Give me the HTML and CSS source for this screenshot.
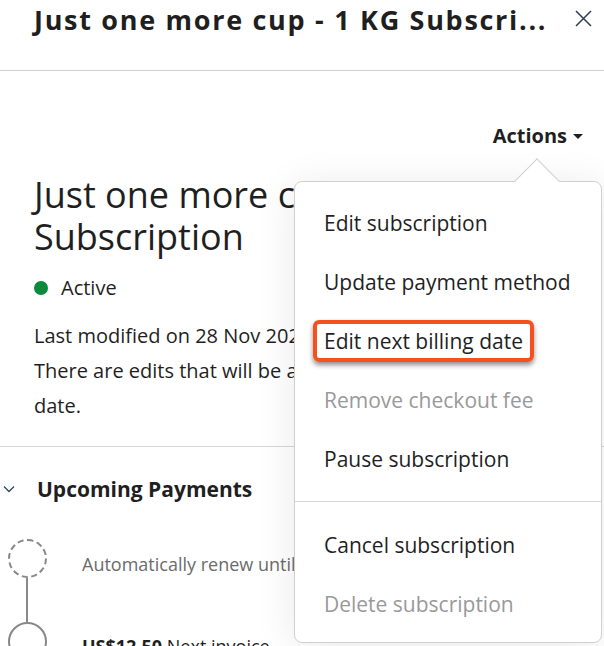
FILE: index.html
```html
<!DOCTYPE html>
<html lang="en">
<head>
  <meta charset="UTF-8">
  <title>Subscription</title>
  <link rel="stylesheet" href="styles.css">
</head>
<body>

  <div class="painel">
    <div class="cabecalho">
      <h1 class="titulo">Just one more cup - 1 KG Subscri...</h1>
      <button class="fechar" aria-label="Close">
        <svg width="17" height="17" viewBox="0 0 17 17"><path d="M1 1 L16 16 M16 1 L1 16" stroke="#2d3e50" stroke-width="1.5" fill="none"/></svg>
      </button>
    </div>

    <div class="linha-acoes">
      <span class="acoes">Actions <span class="seta"></span></span>
    </div>

    <div class="conteudo">
      <h2 class="nome">Just one more cup - 1 KG Subscription</h2>
      <div class="status"><span class="bolinha"></span>Active</div>
      <p class="texto">Last modified on 28 Nov 2023 at 10:42</p>
      <p class="texto">There are edits that will be applied on the next billing date.</p>
    </div>

    <hr class="divisor">

    <div class="secao">
      <div class="secao-titulo">
        <svg width="12" height="8" viewBox="0 0 12 8"><path d="M1 1.5 L6 6.5 L11 1.5" stroke="#33475b" stroke-width="1.3" fill="none"/></svg>
        <span>Upcoming Payments</span>
      </div>
      <div class="linha-tempo">
        <div class="marcadores">
          <span class="circulo tracejado"></span>
          <span class="traco"></span>
          <span class="circulo"></span>
        </div>
        <div class="eventos">
          <div class="evento cinza">Automatically renew until cancelled</div>
          <div class="evento"><b>US$12.50</b> Next invoice</div>
        </div>
      </div>
    </div>

    <!-- menu aberto do botao Actions -->
    <div class="menu">
      <span class="ponta"></span>
      <div class="item">Edit subscription</div>
      <div class="item">Update payment method</div>
      <div class="item"><span class="destaque">Edit next billing date</span></div>
      <div class="item desativado">Remove checkout fee</div>
      <div class="item">Pause subscription</div>
      <div class="menu-divisor"></div>
      <div class="item">Cancel subscription</div>
      <div class="item desativado">Delete subscription</div>
    </div>
  </div>

</body>
</html>
```

FILE: styles.css
```css
body {
  margin: 0;
  font-family: "Open Sans", Arial, sans-serif;
  color: #1f1f1f;
  background: white;
}
.painel {
  position: relative;
  width: 604px;
  height: 646px;
  overflow: hidden;
}
.cabecalho {
  height: 67px;
  border-bottom: 1px solid #cfcfcf;
  display: flex;
  align-items: flex-start;
  justify-content: space-between;
  padding: 3px 12px 0 34px;
}
.titulo {
  margin: 0;
  font-size: 27px;
  line-height: 34px;
  font-weight: 700;
  letter-spacing: 1.7px;
  white-space: nowrap;
}
.fechar {
  background: none;
  border: none;
  padding: 0;
  margin-top: 7px;
  cursor: pointer;
}
.linha-acoes {
  display: flex;
  justify-content: flex-end;
  padding: 50px 21px 0 0;
  height: 30px;
}
.acoes {
  font-size: 20px;
  line-height: 30px;
  font-weight: 700;
  display: flex;
  align-items: center;
  gap: 6px;
}
.seta {
  width: 0;
  height: 0;
  border-left: 5px solid transparent;
  border-right: 5px solid transparent;
  border-top: 5px solid #1f1f1f;
}
.conteudo {
  padding: 23px 34px 0 34px;
  width: 536px;
}
.nome {
  margin: 0;
  font-size: 36px;
  line-height: 42px;
  font-weight: 400;
}
.status {
  margin-top: 14px;
  display: flex;
  align-items: center;
  font-size: 20px;
  line-height: 32px;
}
.bolinha {
  width: 14px;
  height: 14px;
  border-radius: 50%;
  background: #0b8a3e;
  margin: 0 13px 0 0;
}
.texto {
  margin: 0;
  font-size: 20px;
  line-height: 35px;
}
.status + .texto {
  margin-top: 14px;
}
.divisor {
  border: none;
  border-top: 1px solid #d6d6d6;
  margin: 23px 0 0 0;
}
.secao-titulo {
  display: flex;
  align-items: center;
  gap: 22px;
  padding: 28px 0 0 3px;
  font-size: 21px;
  line-height: 28px;
  font-weight: 700;
}
.linha-tempo {
  display: flex;
  padding: 36px 0 0 8px;
}
.marcadores {
  display: flex;
  flex-direction: column;
  align-items: center;
  width: 38px;
}
.circulo {
  width: 35px;
  height: 35px;
  border: 2px solid #888;
  border-radius: 50%;
  flex-shrink: 0;
}
.tracejado {
  border-style: dashed;
}
.traco {
  width: 2px;
  height: 44px;
  background: #888;
}
.eventos {
  padding-left: 36px;
}
.evento {
  font-size: 18px;
  line-height: 24px;
  margin-top: 13px;
  white-space: nowrap;
}
.evento + .evento {
  margin-top: 58px;
}
.cinza {
  color: #6b6b6b;
}
.menu {
  position: absolute;
  top: 181px;
  left: 294px;
  width: 308px;
  height: 462px;
  box-sizing: border-box;
  background: white;
  border: 1px solid #cfcfcf;
  border-radius: 8px;
  padding-top: 11px;
  box-shadow: 0 4px 40px rgba(0, 0, 0, 0.09);
}
.ponta {
  position: absolute;
  top: -17px;
  left: 226px;
  width: 31px;
  height: 31px;
  background: white;
  border-left: 1px solid #cfcfcf;
  border-top: 1px solid #cfcfcf;
  transform: rotate(45deg);
}
.item {
  position: relative;
  padding: 17.5px 0 17.5px 29px;
  font-size: 21px;
  line-height: 24px;
  white-space: nowrap;
}
.desativado {
  color: #999;
}
.destaque {
  margin-left: -11px;
  padding: 3px 7px;
  border: 4px solid #f5511e;
  border-radius: 6px;
  box-shadow: 0 3px 5px rgba(0, 0, 0, 0.45);
}
.menu-divisor {
  border-top: 1px solid #d6d6d6;
  margin: 13px 0 13px 0;
}
```
